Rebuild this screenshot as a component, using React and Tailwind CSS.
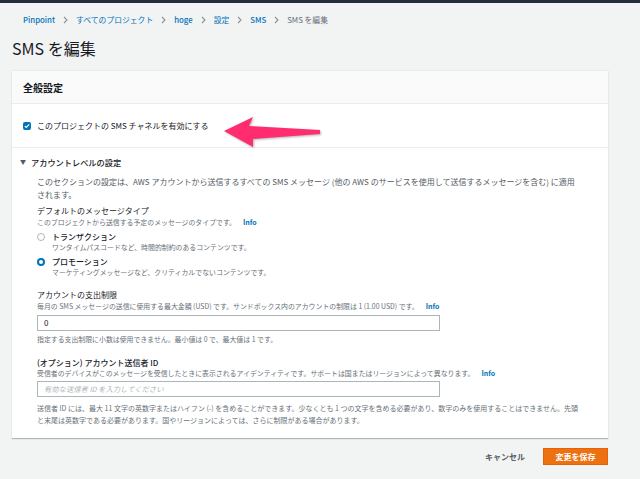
const Sep = () => (
  <svg width="5" height="8" viewBox="0 0 5 8" className="mx-[8px]">
    <path d="M1 1l3 3-3 3" fill="none" stroke="#879596" strokeWidth="1.1" />
  </svg>
);

const Info = () => <span className="ml-[7px] text-[7px] font-bold text-[#0073bb]">Info</span>;

const Radio = ({ checked, label, sub }) => (
  <div className="flex items-start gap-[7px]">
    {checked ? (
      <span className="mt-[1.5px] w-[8px] h-[8px] rounded-full border-[2.5px] border-[#0073bb] bg-white shrink-0" />
    ) : (
      <span className="mt-[1.5px] w-[8px] h-[8px] rounded-full border border-[#aab7b8] bg-white shrink-0" />
    )}
    <div>
      <div className="text-[8px] leading-[11px] font-medium text-[#16191f]">{label}</div>
      <div className="text-[6.9px] leading-[10px] text-[#687078]">{sub}</div>
    </div>
  </div>
);

export default function App() {
  return (
    <div
      className="w-[640px] h-[479px] bg-[#f2f3f3] overflow-hidden"
      style={{ fontFamily: '"Noto Sans CJK JP", "Noto Sans", sans-serif' }}
    >
      <div className="h-[3px] bg-[#232f3e]" />
      <div className="flex items-center pl-[23px] pt-[11px] h-[22px] text-[7.8px]">
        <span className="text-[#0073bb] font-medium">Pinpoint</span>
        <Sep />
        <span className="text-[#0073bb]">すべてのプロジェクト</span>
        <Sep />
        <span className="text-[#0073bb] font-medium">hoge</span>
        <Sep />
        <span className="text-[#0073bb]">設定</span>
        <Sep />
        <span className="text-[#0073bb] font-medium">SMS</span>
        <Sep />
        <span className="text-[#687078]">SMS を編集</span>
      </div>
      <h1 className="pl-[12px] mt-[12px] text-[16px] leading-[22px] text-[#16191f]">SMS を編集</h1>

      <div className="mx-[12px] w-[596px] mt-[11px] bg-white shadow-[0_1px_1px_rgba(0,0,0,0.25)] border-t border-[#eaeded]">
        <div className="h-[33px] flex items-center pl-[11px] bg-[#fafafa] border-b border-[#eaeded]">
          <span className="text-[10px] font-bold text-[#16191f]">全般設定</span>
        </div>
        <div className="relative h-[44px] flex items-center pl-[11px] border-b border-[#eaeded]">
          <span className="w-[8px] h-[8px] rounded-[2px] bg-[#0073bb] flex items-center justify-center">
            <svg width="6" height="6" viewBox="0 0 6 6">
              <path d="M0.8 3.1l1.4 1.4L5.2 1.3" fill="none" stroke="#fff" strokeWidth="1.2" />
            </svg>
          </span>
          <span className="ml-[6px] text-[8px] text-[#16191f]">このプロジェクトの SMS チャネルを有効にする</span>
          <svg
            className="absolute left-[210px] top-[10px]"
            width="100"
            height="36"
            viewBox="0 0 100 36"
          >
            <path
              d="M2 17 L31 3 L27 12 L98 16 L98 20 L31 25 L31 33 Z"
              fill="#ff2d6f"
              style={{ filter: "drop-shadow(1px 1.5px 1px rgba(0,0,0,0.3))" }}
            />
          </svg>
        </div>

        <div className="pl-[8px] pt-[8px] h-[20px]">
          <div className="flex items-center gap-[5px] text-[8.2px] leading-[12px] font-medium text-[#16191f]">
            <span className="text-[6px] text-[#545b64]">▼</span>
            アカウントレベルの設定
          </div>
        </div>

        <div className="pl-[25px] pr-[28px] pt-[7px] pb-[12px]">
          <p className="text-[8px] leading-[13px] text-[#545b64]">
            このセクションの設定は、AWS アカウントから送信するすべての SMS メッセージ (他の AWS のサービスを使用して送信するメッセージを含む) に適用されます。
          </p>

          <div className="mt-[4px] text-[8px] leading-[12px] text-[#16191f]">デフォルトのメッセージタイプ</div>
          <div className="text-[6.9px] leading-[11px] text-[#687078]">
            このプロジェクトから送信する予定のメッセージのタイプです。<Info />
          </div>
          <div className="mt-[3px] flex flex-col gap-[4px]">
            <Radio label="トランザクション" sub="ワンタイムパスコードなど、時間的制約のあるコンテンツです。" />
            <Radio checked label="プロモーション" sub="マーケティングメッセージなど、クリティカルでないコンテンツです。" />
          </div>

          <div className="mt-[12px] text-[8px] leading-[12px] text-[#16191f]">アカウントの支出制限</div>
          <div className="text-[6.9px] leading-[11px] text-[#687078]">
            毎月の SMS メッセージの送信に使用する最大金額 (USD) です。サンドボックス内のアカウントの制限は 1 (1.00 USD) です。<Info />
          </div>
          <div className="mt-[3px] w-[403px] h-[16px] border border-[#aab7b8] flex items-center pl-[6px] text-[8px] text-[#16191f]">
            0
          </div>
          <div className="mt-[3px] text-[6.9px] leading-[11px] text-[#687078]">
            指定する支出制限に小数は使用できません。最小値は 0 で、最大値は 1 です。
          </div>

          <div className="mt-[13px] text-[8px] leading-[10px] font-medium text-[#16191f]">(オプション) アカウント送信者 ID</div>
          <div className="text-[6.9px] leading-[10px] text-[#687078]">
            受信者のデバイスがこのメッセージを受信したときに表示されるアイデンティティです。サポートは国またはリージョンによって異なります。<Info />
          </div>
          <div className="mt-[3px] w-[403px] h-[16px] border border-[#aab7b8] flex items-center pl-[6px] text-[7.3px] italic text-[#aab7b8]">
            有効な送信者 ID を入力してください
          </div>
          <div className="mt-[5px] text-[7px] leading-[12px] text-[#687078]">
            送信者 ID には、最大 11 文字の英数字またはハイフン (-) を含めることができます。少なくとも 1 つの文字を含める必要があり、数字のみを使用することはできません。先頭と末尾は英数字である必要があります。国やリージョンによっては、さらに制限がある場合があります。
          </div>
        </div>
      </div>

      <div className="w-[608px] flex justify-end items-center mt-[10px] gap-[18px]">
        <span className="text-[8px] font-bold text-[#545b64]">キャンセル</span>
        <span className="w-[65px] h-[17px] bg-[#ec7211] border border-[#eb5f07] flex items-center justify-center text-[8px] font-bold text-white">
          変更を保存
        </span>
      </div>
    </div>
  );
}
